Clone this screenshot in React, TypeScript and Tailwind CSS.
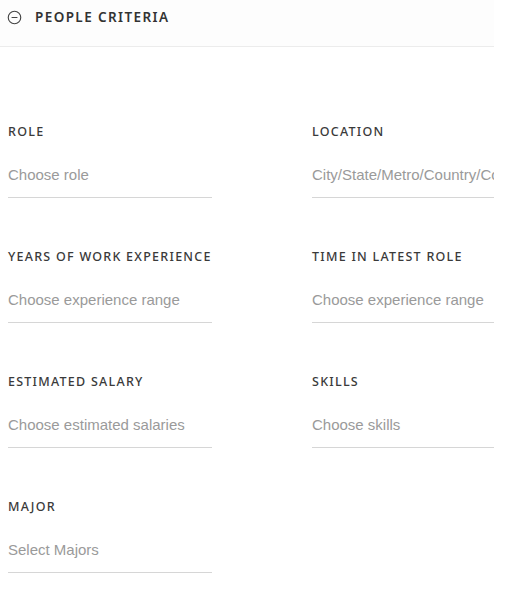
import { CircleMinus } from "lucide-react"

const fields = [
  { label: "ROLE", placeholder: "Choose role" },
  { label: "LOCATION", placeholder: "City/State/Metro/Country/Continent" },
  { label: "YEARS OF WORK EXPERIENCE", placeholder: "Choose experience range" },
  { label: "TIME IN LATEST ROLE", placeholder: "Choose experience range" },
  { label: "ESTIMATED SALARY", placeholder: "Choose estimated salaries" },
  { label: "SKILLS", placeholder: "Choose skills" },
  { label: "MAJOR", placeholder: "Select Majors" },
]

function Field({ label, placeholder }: { label: string; placeholder: string }) {
  return (
    <div className="flex flex-col">
      <label className="h-[22px] text-[12.5px] leading-[22px] font-medium tracking-[1.25px] text-[#3a3a3a] font-['Noto_Sans',sans-serif] whitespace-nowrap">
        {label}
      </label>
      <div className="mt-[21px] pb-[11px] border-b border-[#d6d6d6] overflow-hidden">
        <input
          type="text"
          placeholder={placeholder}
          className="block w-full h-[22px] bg-transparent outline-none text-[15px] leading-[22px] text-[#333] placeholder:text-[#9a9a9a] font-['Liberation_Sans',Arial,sans-serif]"
        />
      </div>
    </div>
  )
}

export default function App() {
  return (
    <div className="w-[494px] min-h-[602px] overflow-hidden bg-white">
      <div className="flex items-start h-[47px] border-b border-[#ececec] bg-[#fdfdfd] pt-[8px]">
        <CircleMinus className="ml-[7px] mt-[2px] w-[15px] h-[15px] text-[#444]" strokeWidth={1.8} />
        <span className="ml-[13px] text-[13.5px] leading-[18px] font-semibold tracking-[1.4px] text-[#333] font-['Noto_Sans',sans-serif]">
          PEOPLE CRITERIA
        </span>
      </div>
      <div className="grid grid-cols-[204px_204px] gap-x-[100px] gap-y-[48px] pl-[8px] pt-[74px]">
        {fields.map((f) => (
          <Field key={f.label} label={f.label} placeholder={f.placeholder} />
        ))}
      </div>
    </div>
  )
}
